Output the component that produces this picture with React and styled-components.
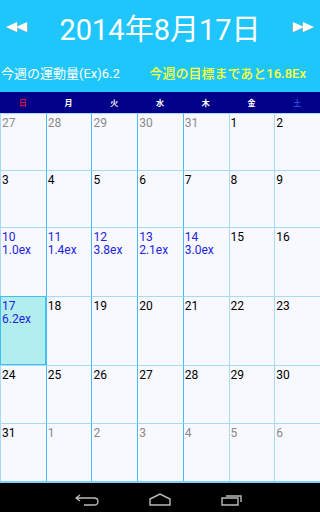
import React from "react";
import styled, { createGlobalStyle } from "styled-components";

const GlobalStyle = createGlobalStyle`
  html, body { margin: 0; padding: 0; background: #000; }
  body { font-family: Roboto, "Noto Sans CJK JP", sans-serif; }
`;

const Screen = styled.div`
  width: 320px;
  height: 512px;
  display: flex;
  flex-direction: column;
  overflow: hidden;
`;

const Header = styled.div`
  background: #1fc6fb;
  height: 92px;
  display: flex;
  flex-direction: column;
`;

const TitleRow = styled.div`
  height: 52px;
  display: flex;
  align-items: center;
  justify-content: space-between;
  padding: 0 5px;
`;

const Title = styled.div`
  color: #fff;
  font-size: 29px;
  font-family: Roboto, "Noto Sans CJK JP", sans-serif;
  margin-top: 1px;
`;

const ArrowBtn = styled.svg`
  width: 24px;
  height: 12px;
  margin-top: 2px;
`;

const SummaryRow = styled.div`
  display: flex;
  justify-content: space-between;
  align-items: center;
  height: 40px;
  padding: 0 14px 0 1px;
  font-size: 13px;
`;

const Summary = styled.span`
  color: ${p => p.$color};
  font-weight: ${p => (p.$bold ? 500 : 400)};
`;

const WeekBar = styled.div`
  background: #000088;
  height: 21px;
  display: grid;
  grid-template-columns: repeat(7, 1fr);
  align-items: center;
`;

const WeekDay = styled.div`
  text-align: center;
  color: ${p => p.$color};
  font-size: 8px;
  font-weight: bold;
`;

const Grid = styled.div`
  display: grid;
  grid-template-columns: repeat(7, 1fr);
  grid-template-rows: 57px 57px 69px 69px 58px 58px;
  background: #f8f8ff;
  border-bottom: 2px solid #7fd2f7;
`;

const Cell = styled.div`
  background: ${p => (p.$today ? "#b3eeee" : "#f8f8ff")};
  border-top: 1px solid #a8daf8;
  border-left: 1px solid ${p => (p.$bright ? "#45bdf0" : "#a8daf8")};
  ${p => p.$today && "border: 1px solid #3fc0ee;"}
  padding: 2px 0 0 1px;
  font-size: 12px;
  line-height: 14px;
  color: ${p => (p.$other ? "#8a8a8a" : "#000")};
  overflow: hidden;
`;

const CellNum = styled.div`
  color: ${p => (p.$blue ? "#2222dd" : "inherit")};
`;

const CellEx = styled.div`
  color: #2222dd;
  font-size: 12px;
  line-height: 13px;
`;

const NavBar = styled.div`
  flex: 1;
  background: #000;
  display: flex;
  align-items: center;
  justify-content: center;
  gap: 44px;
  padding-top: 2px;
`;

const NavIcon = styled.svg`
  width: 28px;
  height: 14px;
`;

const Arrow = ({ dir }) => (
  <ArrowBtn viewBox="0 0 24 12">
    <g transform={dir === "left" ? "" : "translate(24,0) scale(-1,1)"}>
      <polygon points="1,6 12,1 12,11" fill="#9aa" transform="translate(0.8,0.8)" />
      <polygon points="11,6 22,1 22,11" fill="#9aa" transform="translate(0.8,0.8)" />
      <polygon points="1,6 12,1 12,11" fill="#fff" />
      <polygon points="11,6 22,1 22,11" fill="#fff" />
    </g>
  </ArrowBtn>
);

const weekDays = [
  ["日", "#d0103a"],
  ["月", "#fff"],
  ["火", "#fff"],
  ["水", "#fff"],
  ["木", "#fff"],
  ["金", "#fff"],
  ["土", "#2a48d8"],
];

const exData = { 10: "1.0ex", 11: "1.4ex", 12: "3.8ex", 13: "2.1ex", 14: "3.0ex", 17: "6.2ex" };

const buildDays = () => {
  const days = [];
  [27, 28, 29, 30, 31].forEach(d => days.push({ d, other: true }));
  for (let d = 1; d <= 31; d++) days.push({ d });
  for (let d = 1; d <= 6; d++) days.push({ d, other: true });
  return days;
};

export default function App() {
  const days = buildDays();
  return (
    <Screen>
      <GlobalStyle />
      <Header>
        <TitleRow>
          <Arrow dir="left" />
          <Title>2014年8月17日</Title>
          <Arrow dir="right" />
        </TitleRow>
        <SummaryRow>
          <Summary $color="#fff">今週の運動量(Ex)6.2</Summary>
          <Summary $color="#ffff33" $bold>今週の目標まであと16.8Ex</Summary>
        </SummaryRow>
      </Header>
      <WeekBar>
        {weekDays.map(([w, c]) => (
          <WeekDay key={w} $color={c}>{w}</WeekDay>
        ))}
      </WeekBar>
      <Grid>
        {days.map((day, i) => {
          const col = i % 7;
          const ex = !day.other && exData[day.d];
          return (
            <Cell
              key={i}
              $other={day.other}
              $bright={col >= 1 && col <= 4}
              $today={!day.other && day.d === 17}
            >
              <CellNum $blue={!!ex}>{day.d}</CellNum>
              {ex && <CellEx>{ex}</CellEx>}
            </Cell>
          );
        })}
      </Grid>
      <NavBar>
        <NavIcon viewBox="0 0 28 14">
          <path d="M6 3 L2 6 L6 9 M2 6 H20 Q24 6 24 9.5 Q24 13 20 13 H10" fill="none" stroke="#bbb" strokeWidth="1.3" />
        </NavIcon>
        <NavIcon viewBox="0 0 28 14">
          <path d="M4 7 L14 2 L24 7 V13 H4 Z" fill="none" stroke="#bbb" strokeWidth="1.4" />
        </NavIcon>
        <NavIcon viewBox="0 0 28 14">
          <path d="M4 6 H20 V13 H4 Z M8 4 H23 V10" fill="none" stroke="#bbb" strokeWidth="1.4" />
        </NavIcon>
      </NavBar>
    </Screen>
  );
}
